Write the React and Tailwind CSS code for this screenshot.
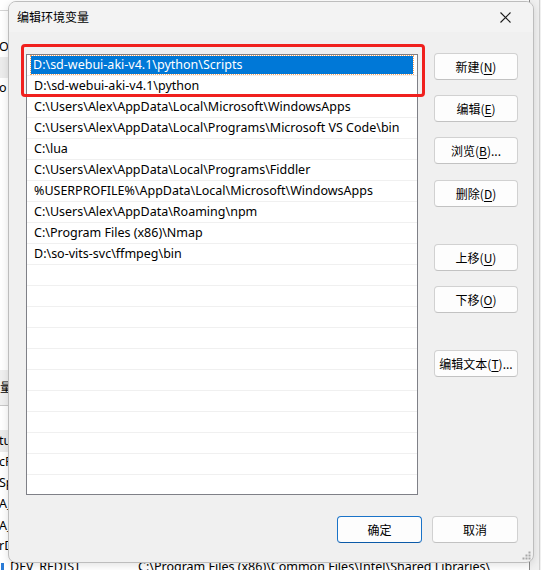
import React from "react";

const paths = [
  "D:\\sd-webui-aki-v4.1\\python\\Scripts",
  "D:\\sd-webui-aki-v4.1\\python",
  "C:\\Users\\Alex\\AppData\\Local\\Microsoft\\WindowsApps",
  "C:\\Users\\Alex\\AppData\\Local\\Programs\\Microsoft VS Code\\bin",
  "C:\\lua",
  "C:\\Users\\Alex\\AppData\\Local\\Programs\\Fiddler",
  "%USERPROFILE%\\AppData\\Local\\Microsoft\\WindowsApps",
  "C:\\Users\\Alex\\AppData\\Roaming\\npm",
  "C:\\Program Files (x86)\\Nmap",
  "D:\\so-vits-svc\\ffmpeg\\bin",
];

const emptyRows = Array.from({ length: 11 });

function Btn({ label, keyChar, suffix = "", className = "" }) {
  return (
    <button
      className={
        "flex h-[27px] w-[84px] shrink-0 items-center justify-center rounded-[4px] border border-[#d1d1d1] border-b-[#c2c2c2] bg-[#fdfdfd] text-[12px] text-black " +
        className
      }
    >
      <span>
        {label}
        {keyChar ? (
          <>
            (<span className="underline underline-offset-2">{keyChar}</span>)
          </>
        ) : null}
        {suffix}
      </span>
    </button>
  );
}

function Row({ text, selected }) {
  return (
    <div className="h-[21px] border-b border-[#f0f0f0] px-[4px] py-[1px]">
      {selected ? (
        <div className="flex h-full items-center bg-[#0078d7] pl-[2px] text-white outline-1 outline-dotted outline-[#f7a35c]">
          {text}
        </div>
      ) : (
        <div className="flex h-full items-center pl-[3px] text-black">{text}</div>
      )}
    </div>
  );
}

export default function App() {
  return (
    <div
      className="relative h-[570px] w-[541px] overflow-hidden bg-white text-[12.5px]"
      style={{ fontFamily: '"Noto Sans", "Noto Sans CJK SC", sans-serif' }}
    >
      {/* background window behind the dialog */}
      <div className="absolute inset-0 flex">
        <div className="w-[529px] bg-white text-[12.5px]">
          <div className="h-[10px]" />
          <div className="h-px bg-[#d4d4d4]" />
          <div className="h-[26px]" />
          <div className="-ml-[1px] h-[20px] leading-[20px]">Or</div>
          <div className="h-[21px] bg-[#ececec]" />
          <div className="-ml-[1px] h-[20px] leading-[20px]">o</div>
          <div className="h-[272px]" />
          <div className="h-[35px] bg-[#f0f0f0] leading-[35px]">量(</div>
          <div className="h-px bg-[#c8c8c8]" />
          <div className="h-[24px]" />
          <div className="-ml-[1px] h-[22px] bg-[#ececec] leading-[22px]">tu</div>
          <div className="-ml-[1px] h-[20px] leading-[20px]">cF</div>
          <div className="-ml-[1px] h-[21px] leading-[21px]">Sp</div>
          <div className="-ml-[1px] h-[22px] leading-[22px]">A_</div>
          <div className="-ml-[1px] h-[22px] leading-[22px]">A_</div>
          <div className="-ml-[1px] h-[18px] leading-[18px]">rD</div>
          <div className="relative flex h-[25px] items-center">
            <span className="absolute left-[1px] top-[8px] h-[10px] w-[3px] bg-[#2b7bd6]" />
            <span className="ml-[10px] w-[128px] text-black">DEV_REDIST</span>
            <span className="text-black">C:\Program Files (x86)\Common Files\Intel\Shared Libraries\</span>
          </div>
        </div>
        <div className="w-px bg-[#8a8a8a]" />
        <div className="flex flex-1 bg-[#f0f0f0]">
          <div className="ml-[9px] w-px bg-[#d0d0d0]" />
        </div>
      </div>

      {/* dialog window */}
      <div className="absolute left-[8px] top-[1px] flex h-[562px] w-[526px] flex-col overflow-hidden rounded-[8px] border border-[#bdbdbd] bg-[#f0f0f0] shadow-[0_2px_8px_rgba(0,0,0,0.12)]">
        <div className="flex h-[30px] shrink-0 items-center justify-between bg-[#f3f3f3] pl-[8px] pr-[22px]">
          <span
            className="text-[12px] text-black"
            style={{ fontFamily: '"Noto Sans CJK SC", sans-serif' }}
          >
            编辑环境变量
          </span>
          <svg width="11" height="11" viewBox="0 0 11 11">
            <path d="M0.5 0.5 L10.5 10.5 M10.5 0.5 L0.5 10.5" stroke="#1c1c1c" strokeWidth="1.1" />
          </svg>
        </div>

        <div className="relative flex flex-1 flex-col pl-[17px] pr-[15px] pt-[22px]">
          <div className="flex gap-[16px]">
            <div className="h-[441px] w-[392px] shrink-0 overflow-hidden border border-[#7f8087] bg-white">
              {paths.map((p, i) => (
                <Row key={p} text={p} selected={i === 0} />
              ))}
              {emptyRows.map((_, i) => (
                <Row key={"e" + i} text="" />
              ))}
            </div>
            <div
              className="-mt-[1px] flex flex-col"
              style={{ fontFamily: '"Noto Sans CJK SC", sans-serif' }}
            >
              <Btn label="新建" keyChar="N" />
              <Btn label="编辑" keyChar="E" className="mt-[15px]" />
              <Btn label="浏览" keyChar="B" suffix="..." className="mt-[15px]" />
              <Btn label="删除" keyChar="D" className="mt-[16px]" />
              <Btn label="上移" keyChar="U" className="mt-[37px]" />
              <Btn label="下移" keyChar="O" className="mt-[15px]" />
              <Btn label="编辑文本" keyChar="T" suffix="..." className="mt-[37px]" />
            </div>
          </div>

          <div
            className="mt-[21px] flex justify-end gap-[10px]"
            style={{ fontFamily: '"Noto Sans CJK SC", sans-serif' }}
          >
            <button className="flex h-[27px] w-[85px] items-center justify-center rounded-[4px] border border-[#1a73c8] border-b-[#0b5aa8] bg-[#fdfdfd] text-[12px] text-black">
              确定
            </button>
            <button className="flex h-[27px] w-[86px] items-center justify-center rounded-[4px] border border-[#d1d1d1] border-b-[#c2c2c2] bg-[#fdfdfd] text-[12px] text-black">
              取消
            </button>
          </div>

          {/* resize grip */}
          <svg className="absolute bottom-[2px] right-[2px]" width="9" height="9" viewBox="0 0 9 9">
            <rect x="6.5" y="0.5" width="2" height="2" fill="#a8a8a8" />
            <rect x="3.5" y="3.5" width="2" height="2" fill="#a8a8a8" />
            <rect x="6.5" y="3.5" width="2" height="2" fill="#a8a8a8" />
            <rect x="0.5" y="6.5" width="2" height="2" fill="#a8a8a8" />
            <rect x="3.5" y="6.5" width="2" height="2" fill="#a8a8a8" />
            <rect x="6.5" y="6.5" width="2" height="2" fill="#a8a8a8" />
          </svg>
        </div>
      </div>

      {/* red highlight around the first two entries */}
      <div className="absolute left-[21px] top-[44px] h-[53px] w-[404px] rounded-[4px] border-[3px] border-[#f0201e]" />
    </div>
  );
}
